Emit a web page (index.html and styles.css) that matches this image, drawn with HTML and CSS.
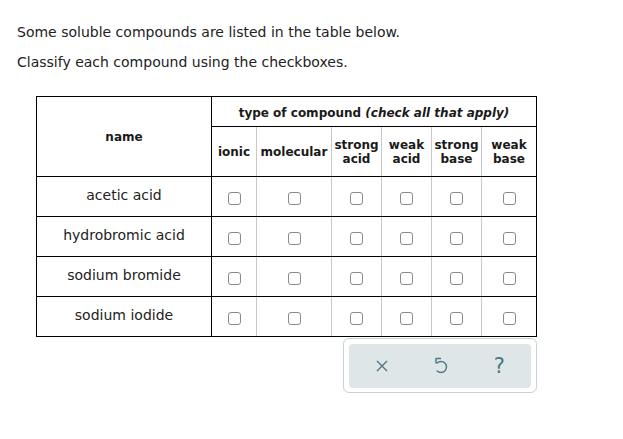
FILE: index.html
```html
<!DOCTYPE html>
<html>
<head>
<meta charset="utf-8">
<link rel="stylesheet" href="styles.css">
</head>
<body>
<div class="page">
  <p class="intro">Some soluble compounds are listed in the table below.</p>
  <p class="intro second">Classify each compound using the checkboxes.</p>
  <table class="grid">
    <colgroup>
      <col class="c-name"><col class="c-ionic"><col class="c-mol"><col class="c-50"><col class="c-50"><col class="c-50"><col class="c-last">
    </colgroup>
    <thead>
      <tr class="h1">
        <th rowspan="2" class="namehead">name</th>
        <th colspan="6" class="typehead">type of compound <i>(check all that apply)</i></th>
      </tr>
      <tr class="h2">
        <th class="sub first">ionic</th>
        <th class="sub">molecular</th>
        <th class="sub">strong<br>acid</th>
        <th class="sub">weak<br>acid</th>
        <th class="sub">strong<br>base</th>
        <th class="sub">weak<br>base</th>
      </tr>
    </thead>
    <tbody>
      <tr><td class="name">acetic acid</td><td class="cb first"><span class="box"></span></td><td class="cb"><span class="box"></span></td><td class="cb"><span class="box"></span></td><td class="cb"><span class="box"></span></td><td class="cb"><span class="box"></span></td><td class="cb"><span class="box"></span></td></tr>
      <tr><td class="name">hydrobromic acid</td><td class="cb first"><span class="box"></span></td><td class="cb"><span class="box"></span></td><td class="cb"><span class="box"></span></td><td class="cb"><span class="box"></span></td><td class="cb"><span class="box"></span></td><td class="cb"><span class="box"></span></td></tr>
      <tr><td class="name">sodium bromide</td><td class="cb first"><span class="box"></span></td><td class="cb"><span class="box"></span></td><td class="cb"><span class="box"></span></td><td class="cb"><span class="box"></span></td><td class="cb"><span class="box"></span></td><td class="cb"><span class="box"></span></td></tr>
      <tr><td class="name">sodium iodide</td><td class="cb first"><span class="box"></span></td><td class="cb"><span class="box"></span></td><td class="cb"><span class="box"></span></td><td class="cb"><span class="box"></span></td><td class="cb"><span class="box"></span></td><td class="cb"><span class="box"></span></td></tr>
    </tbody>
  </table>
  <div class="actions">
    <div class="inner">
      <span class="btn">
        <svg width="12" height="12" viewBox="0 0 12 12"><path d="M1 1 L11 11 M11 1 L1 11" stroke="#4d7884" stroke-width="1.4" fill="none"/></svg>
      </span>
      <span class="btn">
        <svg width="14" height="17" viewBox="0 0 14 17"><path d="M3.1 6.1 A5.5 5.5 0 1 1 3.1 13.9" stroke="#4d7884" stroke-width="1.4" fill="none" stroke-linecap="round"/><path d="M6.5 1.5 H2 V6" stroke="#4d7884" stroke-width="1.4" fill="none" stroke-linecap="round" stroke-linejoin="round"/></svg>
      </span>
      <span class="btn q">?</span>
    </div>
  </div>
</div>
</body>
</html>
```
FILE: styles.css
```css
html, body {
  margin: 0;
  padding: 0;
  background: #fff;
}
.page {
  font-family: "DejaVu Sans", Verdana, sans-serif;
  font-size: 14px;
  color: #222;
  padding: 23px 0 0 17px;
}
.intro {
  margin: 0;
  line-height: 18px;
}
.second {
  margin-top: 12px;
}
.grid {
  margin: 25px 0 0 19px;
  border-collapse: collapse;
  table-layout: fixed;
  width: 501px;
}
.c-name { width: 175px; }
.c-ionic { width: 45px; }
.c-mol { width: 75px; }
.c-50 { width: 50px; }
.c-last { width: 55px; }
.grid th, .grid td {
  padding: 0;
  text-align: center;
  border: 1px solid #000;
}
.grid th {
  font-weight: bold;
  font-size: 12px;
  color: #1a1a1a;
}
.namehead {
  vertical-align: middle;
  padding-top: 1px !important;
}
.h1 { height: 30px; }
.h1 .typehead { padding-top: 2px; }
.h2 { height: 50px; }
.sub {
  line-height: 14px;
  border-left-color: #c8c8c8 !important;
  border-right-color: #c8c8c8 !important;
  padding-top: 1px !important;
}
.grid tbody tr { height: 40px; }
.name {
  vertical-align: middle;
  padding-bottom: 4px !important;
}
.cb {
  border-left-color: #c8c8c8 !important;
  border-right-color: #c8c8c8 !important;
  vertical-align: middle;
}
.grid .first { border-left-color: #000 !important; }
.grid tr > :last-child { border-right-color: #000 !important; }
.box {
  display: inline-block;
  width: 11px;
  height: 11px;
  border: 1px solid #8a8a8a;
  border-radius: 3px;
  vertical-align: middle;
  margin-top: 1px;
}
.actions {
  margin: 1px 0 0 326px;
  width: 192px;
  height: 53px;
  border: 1px solid #c6d2d6;
  border-radius: 6px;
  display: flex;
  align-items: center;
  justify-content: center;
}
.inner {
  width: 182px;
  height: 44px;
  background: #dfe6e8;
  border-radius: 4px;
  display: flex;
  align-items: center;
  justify-content: space-between;
  padding: 0 26px 0 27px;
  box-sizing: border-box;
}
.btn {
  display: flex;
  align-items: center;
  justify-content: center;
  height: 20px;
}
.q {
  font-family: "DejaVu Sans", sans-serif;
  font-size: 21px;
  color: #4d7884;
  font-weight: normal;
}
```
